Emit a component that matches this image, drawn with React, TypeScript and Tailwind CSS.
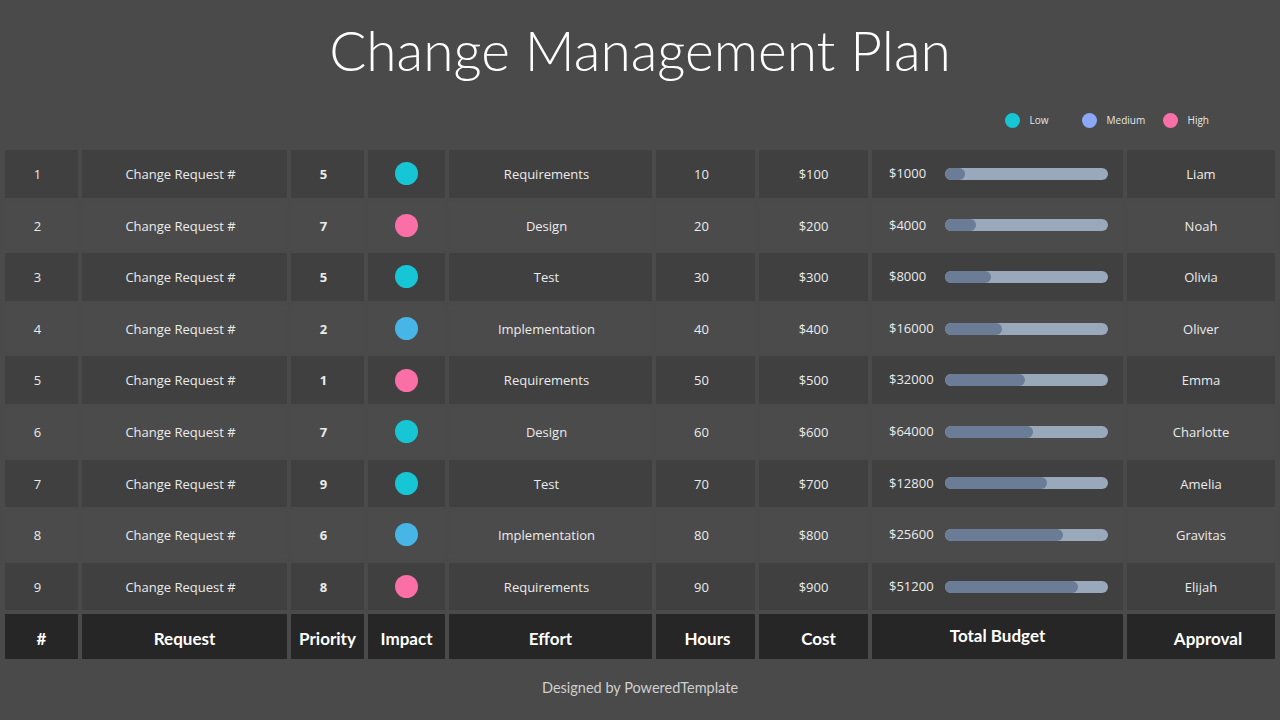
import React from "react";

const rows = [
  { n: 1, p: 5, c: "#17c6d4", e: "Requirements", h: 10, cost: "$100", b: "$1000", f: 20, a: "Liam" },
  { n: 2, p: 7, c: "#f96fa6", e: "Design", h: 20, cost: "$200", b: "$4000", f: 31, a: "Noah" },
  { n: 3, p: 5, c: "#17c6d4", e: "Test", h: 30, cost: "$300", b: "$8000", f: 46, a: "Olivia" },
  { n: 4, p: 2, c: "#47b5e6", e: "Implementation", h: 40, cost: "$400", b: "$16000", f: 57, a: "Oliver" },
  { n: 5, p: 1, c: "#f96fa6", e: "Requirements", h: 50, cost: "$500", b: "$32000", f: 80, a: "Emma" },
  { n: 6, p: 7, c: "#17c6d4", e: "Design", h: 60, cost: "$600", b: "$64000", f: 88, a: "Charlotte" },
  { n: 7, p: 9, c: "#17c6d4", e: "Test", h: 70, cost: "$700", b: "$12800", f: 102, a: "Amelia" },
  { n: 8, p: 6, c: "#47b5e6", e: "Implementation", h: 80, cost: "$800", b: "$25600", f: 118, a: "Gravitas" },
  { n: 9, p: 8, c: "#f96fa6", e: "Requirements", h: 90, cost: "$900", b: "$51200", f: 133, a: "Elijah" },
];

const cellFont = { fontFamily: "'Open Sans', 'Noto Sans', sans-serif" };
const headFont = { fontFamily: "Lato, 'Open Sans', sans-serif" };

const heads: { t: string; cls: string }[] = [
  { t: "#", cls: "" },
  { t: "Request", cls: "" },
  { t: "Priority", cls: "" },
  { t: "Impact", cls: "" },
  { t: "Effort", cls: "" },
  { t: "Hours", cls: "pl-[4px]" },
  { t: "Cost", cls: "pl-[10px]" },
  { t: "Total Budget", cls: "" },
  { t: "Approval", cls: "pl-[14px]" },
];

export default function App() {
  return (
    <div className="w-[1280px] h-[720px] bg-[#4a4a4a] text-white overflow-hidden flex flex-col" style={cellFont}>
      <h1
        className="text-center text-[55px] font-light leading-none pt-[23px] h-[104px] text-white"
        style={headFont}
      >
        Change Management Plan
      </h1>
      <div className="h-[46px] flex items-start justify-end pr-[71px] pt-[9px] text-[10px] text-[#e6e6e6]">
        <div className="flex items-center w-[77px] gap-[10px]">
          <span className="w-[15px] h-[15px] rounded-full bg-[#17c6d4]" />
          <span>Low</span>
        </div>
        <div className="flex items-center w-[81px] gap-[10px]">
          <span className="w-[15px] h-[15px] rounded-full bg-[#8ba7f6]" />
          <span>Medium</span>
        </div>
        <div className="flex items-center gap-[10px]">
          <span className="w-[15px] h-[15px] rounded-full bg-[#f96fa6]" />
          <span>High</span>
        </div>
      </div>
      <div className="pl-[5px]">
        <div className="grid grid-cols-[73px_205px_73px_77px_203px_99px_109px_251px_148px] gap-[4px] text-[13px] text-[#ebebeb]">
          {rows.map((r) => {
            const bg = r.n % 2 === 1 ? "bg-[#404040]" : "bg-[#4b4b4b]";
            const cell = `${bg} h-[47.6px] flex items-center justify-center pt-[2px]`;
            const cellL = `${cell} pr-[8px]`;
            return (
              <React.Fragment key={r.n}>
                <div className={cellL}>{r.n}</div>
                <div className={cellL}>Change Request #</div>
                <div className={`${cellL} font-bold`}>{r.p}</div>
                <div className={`${bg} h-[47.6px] flex items-center justify-center`}>
                  <span className="w-[23px] h-[23px] rounded-full" style={{ background: r.c }} />
                </div>
                <div className={cellL}>{r.e}</div>
                <div className={cellL}>{r.h}</div>
                <div className={cell}>{r.cost}</div>
                <div className={`${bg} h-[47.6px] flex items-center pl-[17px]`}>
                  <span className="w-[56px]">{r.b}</span>
                  <div className="w-[163px] h-[12px] rounded-full bg-[#9aa8bb] overflow-hidden">
                    <div className="h-full rounded-full bg-[#6a7c96]" style={{ width: r.f }} />
                  </div>
                </div>
                <div className={cell}>{r.a}</div>
              </React.Fragment>
            );
          })}
          {heads.map(({ t, cls }) => (
            <div
              key={t}
              className={`bg-[#262626] h-[45px] flex items-center justify-center text-[17px] font-bold text-white ${
                t === "Total Budget" ? "pb-[2px]" : "pt-[3px]"
              } ${cls}`}
              style={headFont}
            >
              {t}
            </div>
          ))}
        </div>
      </div>
      <div className="text-center text-[14.5px] text-[#cfcfcf] mt-[18px]" style={headFont}>
        Designed by PoweredTemplate
      </div>
    </div>
  );
}
